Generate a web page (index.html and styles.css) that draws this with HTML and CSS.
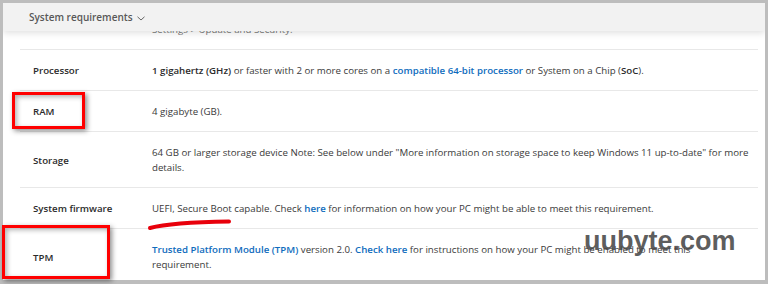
FILE: index.html
```html
<!DOCTYPE html>
<html lang="en">
<head>
  <meta charset="UTF-8" />
  <title>System requirements</title>
  <link rel="stylesheet" href="styles.css">
</head>
<body>
  <div class="frame">
    <div class="specs">
      <div class="row cut">
        <div class="label"></div>
        <div class="value">Settings &gt; Update and Security.</div>
      </div>
      <div class="row">
        <div class="label">Processor</div>
        <div class="value"><b>1 gigahertz (GHz)</b> or faster with 2 or more cores on a <a href="#">compatible 64-bit processor</a> or System on a Chip (<b>SoC</b>).</div>
      </div>
      <div class="row">
        <div class="label">RAM</div>
        <div class="value">4 gigabyte (GB).</div>
      </div>
      <div class="row">
        <div class="label">Storage</div>
        <div class="value">64 GB or larger storage device Note: See below under "More information on storage space to keep Windows 11 up-to-date" for more details.</div>
      </div>
      <div class="row">
        <div class="label">System firmware</div>
        <div class="value">UEFI, Secure Boot capable. Check <a href="#">here</a> for information on how your PC might be able to meet this requirement.</div>
      </div>
      <div class="row">
        <div class="label">TPM</div>
        <div class="value"><a href="#">Trusted Platform Module (TPM)</a> version 2.0. <a href="#">Check here</a> for instructions on how your PC might be enabled to meet this<br>requirement.</div>
      </div>
    </div>

    <div class="bar">
      <span>System requirements</span>
      <svg class="chev" width="8" height="5" viewBox="0 0 8 5"><path d="M0.5 0.8 L4 4 L7.5 0.8" fill="none" stroke="#666" stroke-width="1"/></svg>
    </div>
  </div>

  <!-- annotations drawn over the screenshot -->
  <div class="mark mark-ram"></div>
  <div class="mark mark-tpm"></div>
  <svg class="scribble" width="90" height="14" viewBox="0 0 90 14">
    <path d="M5 9 C 20 5, 50 3, 84 2.5" fill="none" stroke="#e8000b" stroke-width="4" stroke-linecap="round"/>
  </svg>
  <div class="watermark">uubyte.com</div>
</body>
</html>
```

FILE: styles.css
```css
* { margin: 0; padding: 0; box-sizing: border-box; }
html, body { width: 100%; height: 100%; overflow: hidden; }
body {
  background: #bdbdbd;
  padding: 3px 3px 4px 3px;
  font-family: 'Open Sans', 'Noto Sans', sans-serif;
  font-size: 9.7px;
  color: #3a3a3a;
  position: relative;
}
.frame {
  position: relative;
  height: 277px;
  background: #fff;
  overflow: hidden;
}
.bar {
  position: absolute;
  top: 0; left: 0; right: 0;
  height: 28px;
  background: #f2f2f2;
  box-shadow: 0 2px 7px rgba(0, 0, 0, 0.13);
  display: flex;
  align-items: center;
  padding-left: 26px;
  gap: 4px;
  font-size: 10px;
  font-weight: 600;
  color: #585858;
}
.chev { margin-top: 2px; }
.specs { margin: 0 7px 0 17px; }
.row {
  display: grid;
  grid-template-columns: 119px 1fr;
  align-items: center;
  border-top: 1px solid #e8e8e8;
  padding: 13px 2px 12px 13px;
  line-height: 15px;
}
.row.cut { border-top: 0; padding-top: 19px; color: #777; }
.label { font-weight: 600; color: #2b2b2b; }
.value b { font-weight: 600; color: #2b2b2b; }
.value a { color: #0f6cbd; font-weight: 600; text-decoration: none; }

.mark {
  position: absolute;
  border: 3px solid #f00;
  box-shadow: 2px 2px 5px rgba(0, 0, 0, 0.45), inset 2px 2px 5px rgba(0, 0, 0, 0.3);
}
.mark-ram { left: 12px; top: 92px; width: 73px; height: 37px; }
.mark-tpm { left: 2px; top: 225px; width: 108px; height: 54px; }
.scribble { position: absolute; left: 145px; top: 219px; }
.watermark {
  position: absolute;
  left: 584px; top: 226px;
  font-family: 'Liberation Sans', Arial, sans-serif;
  font-weight: bold;
  font-size: 27px;
  color: rgba(72, 72, 72, 0.88);
}
```
